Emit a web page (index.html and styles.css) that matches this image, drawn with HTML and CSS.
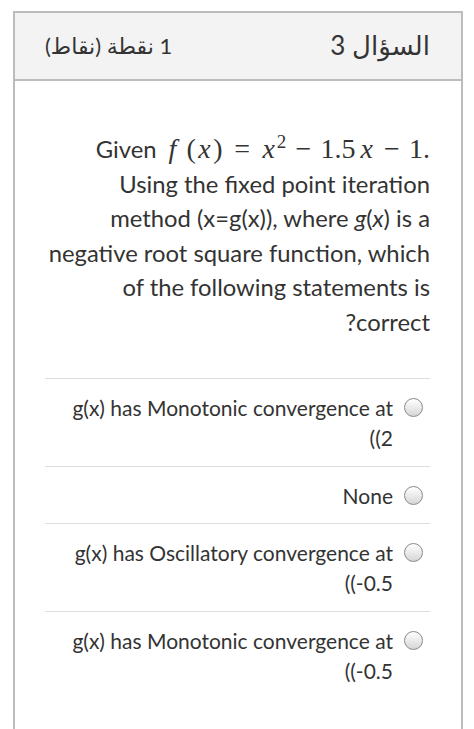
FILE: index.html
```html
<!DOCTYPE html>
<html lang="ar" dir="rtl">
<head>
<meta charset="utf-8">
<title>السؤال 3</title>
<link rel="stylesheet" href="styles.css">
</head>
<body>
<div class="card">
  <div class="header">
    <span class="qno">السؤال 3</span>
    <span class="pts">1 نقطة (نقاط)</span>
  </div>
  <div class="content">
    <p class="question">Given <span class="math" dir="ltr"><span class="mi mf">f</span><span class="mo">(</span><span class="mi">x</span><span class="mo">)</span><span class="rel">=</span><span class="mi">x</span><sup>2</sup><span class="bin">−</span>1.5<span class="mi mx">x</span><span class="bin">−</span>1.</span> Using the fixed point iteration method (x=g(x)), where <i>g</i>(<i>x</i>) is a negative root square function, which of the following statements is correct?</p>
    <div class="options">
      <label class="option"><span class="radio"></span><span class="otext" dir="ltr">g(x) has Monotonic convergence at ((2</span></label>
      <label class="option"><span class="radio"></span><span class="otext" dir="ltr">None</span></label>
      <label class="option"><span class="radio"></span><span class="otext" dir="ltr">g(x) has Oscillatory convergence at ((-0.5</span></label>
      <label class="option"><span class="radio"></span><span class="otext" dir="ltr">g(x) has Monotonic convergence at ((-0.5</span></label>
    </div>
  </div>
</div>
</body>
</html>
```
FILE: styles.css
```css
html, body {
  margin: 0;
  padding: 0;
  background: #ffffff;
  height: 729px;
  overflow: hidden;
}
body {
  font-family: "Lato", "DejaVu Sans", sans-serif;
  color: #333333;
  padding-top: 11px;
  box-sizing: border-box;
}
.card {
  margin: 0 11px 0 13px;
  height: 718px;
  border: 2px solid #bcbcbc;
  border-bottom: none;
  box-sizing: border-box;
}
.header {
  height: 68px;
  box-sizing: border-box;
  background: #f3f3f3;
  border-bottom: 2px solid #bcbcbc;
  display: flex;
  justify-content: space-between;
  align-items: center;
  padding: 0 31px 2px 30px;
}
.qno {
  font-size: 26px;
  color: #333;
}
.pts {
  font-size: 22px;
  color: #333;
}
.content {
  padding: 51px 31px 0 30px;
}
.question {
  margin: 0;
  font-size: 23.8px;
  line-height: 34.5px;
  text-align: right;
}
.math {
  font-family: "Liberation Serif", "DejaVu Serif", serif;
  font-size: 28px;
  unicode-bidi: isolate;
  white-space: nowrap;
  margin-left: 2px;
}
.math .mi {
  display: inline-block;
  font-style: italic;
  width: 0.572em;
  text-align: center;
}
.math .mf {
  width: 0.55em;
  margin-right: 0.2em;
}
.math .mx {
  margin-left: 0.12em;
}
.math .mo {
  display: inline-block;
  width: 0.389em;
  text-align: center;
}
.math .rel {
  display: inline-block;
  width: 0.778em;
  text-align: center;
  margin: 0 0.278em;
}
.math .bin {
  display: inline-block;
  width: 0.778em;
  text-align: center;
  margin: 0 0.222em;
}
.math sup {
  font-size: 19px;
  line-height: 0;
  margin-left: 0;
}
.options {
  margin-top: 39px;
}
.option {
  display: flex;
  align-items: flex-start;
  gap: 11px;
  border-top: 1px solid #dddddd;
  padding: 14px 7px 12.5px 0;
  font-size: 21px;
  line-height: 30px;
}
.otext {
  text-align: right;
  flex: 1;
}
.radio {
  flex: none;
  width: 17px;
  height: 17px;
  margin-top: 5px;
  border: 1.5px solid #8a8a8a;
  border-radius: 50%;
  background: linear-gradient(#ffffff, #d6d6d6);
}
```
